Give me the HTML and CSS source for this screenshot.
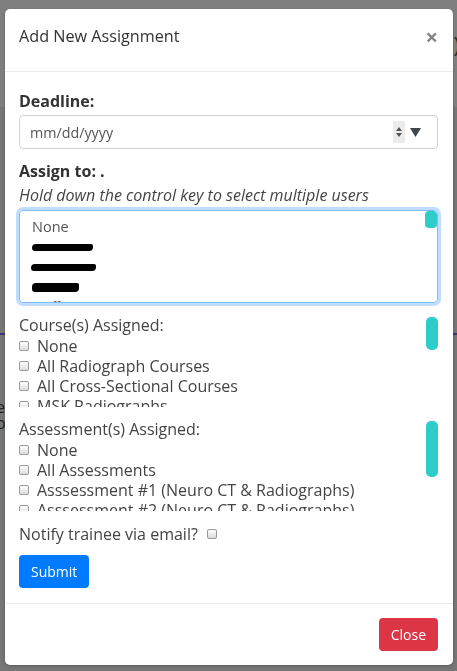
FILE: index.html
```html
<!DOCTYPE html>
<html lang="en">
<head>
<meta charset="utf-8">
<title>Add New Assignment</title>
<link rel="stylesheet" href="styles.css">
</head>
<body>
<div class="page">
  <div class="page-top"><span class="page-title">)</span></div>
  <div class="page-main">
    <div class="page-rule"></div>
    <p class="page-text">e<br>o</p>
  </div>
</div>

<div class="modal" role="dialog" aria-labelledby="modal-title">
  <div class="modal-header">
    <h5 class="modal-title" id="modal-title">Add New Assignment</h5>
    <button class="close" type="button" aria-label="Close">×</button>
  </div>

  <div class="modal-body">
    <div class="field-label">Deadline:</div>
    <div class="date-input">
      <span class="date-placeholder">mm/dd/yyyy</span>
      <span class="spin">
        <svg width="8" height="14" viewBox="0 0 8 14"><path d="M4 2 L7 6 L1 6 Z M4 12 L7 8 L1 8 Z" fill="#555"/></svg>
      </span>
      <span class="drop">
        <svg width="11" height="9" viewBox="0 0 11 9"><path d="M0 0 H11 L5.5 9 Z" fill="#3f454c"/></svg>
      </span>
    </div>

    <div class="field-label field-label-gap">Assign to: .</div>
    <p class="hint">Hold down the control key to select multiple users</p>

    <div class="listbox" role="listbox">
      <div class="opt">None</div>
      <div class="opt"><span class="redact redact-a"></span></div>
      <div class="opt"><span class="redact redact-b"></span></div>
      <div class="opt"><span class="redact redact-c"></span></div>
      <div class="opt opt-faint">ff</div>
      <div class="thumb thumb-select"></div>
    </div>

    <div class="checklist">
      <div class="checklist-title">Course(s) Assigned:</div>
      <label class="check"><input type="checkbox"> None</label>
      <label class="check"><input type="checkbox"> All Radiograph Courses</label>
      <label class="check"><input type="checkbox"> All Cross-Sectional Courses</label>
      <label class="check"><input type="checkbox"> MSK Radiographs</label>
      <label class="check"><input type="checkbox"> Neuro CT</label>
      <div class="thumb thumb-courses"></div>
    </div>

    <div class="checklist">
      <div class="checklist-title">Assessment(s) Assigned:</div>
      <label class="check"><input type="checkbox"> None</label>
      <label class="check"><input type="checkbox"> All Assessments</label>
      <label class="check"><input type="checkbox"> Asssessment #1 (Neuro CT &amp; Radiographs)</label>
      <label class="check"><input type="checkbox"> Asssessment #2 (Neuro CT &amp; Radiographs)</label>
      <label class="check"><input type="checkbox"> Asssessment #3 (MSK Radiographs)</label>
      <div class="thumb thumb-assess"></div>
    </div>

    <label class="notify">Notify trainee via email? <input type="checkbox"></label>

    <button class="btn btn-primary" type="button">Submit</button>
  </div>

  <div class="modal-footer">
    <button class="btn btn-danger" type="button">Close</button>
  </div>
</div>
</body>
</html>
```

FILE: styles.css
```css
* { box-sizing: border-box; }

html, body {
  margin: 0;
  padding: 0;
}

body {
  background: #767676;
  font-family: "Open Sans", "Liberation Sans", sans-serif;
  color: #444;
  height: 671px;
  overflow: hidden;
}

/* page behind the backdrop */
.page-top {
  height: 107px;
  background: #7f7f7f;
  display: flex;
  justify-content: flex-end;
}
.page-title {
  font-size: 22px;
  line-height: 22px;
  margin-top: 33px;
  margin-right: -3px;
  color: #3a2a14;
}
.page-main {
  padding-top: 226px;
}
.page-rule {
  height: 2px;
  background: #3d3576;
}
.page-text {
  margin: 64px 0 0 -4px;
  font-size: 16px;
  line-height: 16px;
  color: #222;
}

/* modal */
.modal {
  position: fixed;
  left: 5px;
  top: 9px;
  width: 448px;
  height: 656px;
  background: #fff;
  border-radius: 5px;
  box-shadow: 0 1px 3px rgba(0,0,0,.25);
  display: flex;
  flex-direction: column;
  overflow: hidden;
}

.modal-header {
  display: flex;
  align-items: flex-start;
  justify-content: space-between;
  padding: 16px 15px 24px 14px;
  border-bottom: 1px solid #e9ecef;
}
.modal-title {
  margin: 0;
  font-size: 16.2px;
  line-height: 22px;
  font-weight: 400;
  color: #333;
}
.close {
  border: 0;
  background: none;
  padding: 0;
  margin: 0;
  font-family: "Open Sans", "Liberation Sans", sans-serif;
  font-size: 22px;
  line-height: 22px;
  font-weight: 700;
  color: #858585;
  cursor: pointer;
}

.modal-body {
  flex: 1;
  padding: 17px 15px 15px 14px;
  display: flex;
  flex-direction: column;
  align-items: stretch;
}

.field-label {
  font-size: 16px;
  line-height: 24px;
  font-weight: 700;
  color: #333;
  margin-bottom: 2px;
}
.field-label-gap {
  margin-top: 10px;
  margin-bottom: 0;
}

.date-input {
  height: 34px;
  border: 1px solid #ced4da;
  border-radius: 4px;
  display: flex;
  align-items: center;
  padding: 0 16px 0 10px;
}
.date-placeholder {
  flex: 1;
  font-size: 14.3px;
  color: #555;
}
.spin {
  width: 12px;
  height: 22px;
  background: #ececec;
  display: flex;
  align-items: center;
  justify-content: center;
  margin-right: 5px;
}
.drop {
  display: flex;
  width: 11px;
}

.hint {
  margin: 0;
  font-size: 16px;
  line-height: 24px;
  font-style: italic;
  color: #444;
}

.listbox {
  position: relative;
  margin-top: 3px;
  height: 93px;
  border: 1px solid #80bdff;
  border-radius: 4px;
  box-shadow: 0 0 0 3px rgba(0,123,255,.25);
  padding: 6px 12px;
  overflow: hidden;
}
.opt {
  height: 20px;
  line-height: 20px;
  font-size: 14.5px;
  color: #555;
  display: flex;
  align-items: center;
}
.opt-faint {
  padding-left: 20px;
  font-size: 12px;
}
.redact {
  display: block;
  height: 7px;
  background: #000;
  border-radius: 4px 2px 4px 3px;
}
.redact-a { width: 61px; }
.redact-b { width: 65px; margin-left: -1px; }
.redact-c { width: 47px; height: 9px; }

.thumb {
  position: absolute;
  right: 0;
  top: 3px;
  width: 12px;
  background: #2ecccb;
  border-radius: 5px;
}
.thumb-select { top: 0; height: 17px; border-radius: 4px; }
.thumb-courses { height: 33px; }
.thumb-assess { height: 56px; }

.checklist {
  position: relative;
  margin-top: 11px;
  height: 93px;
  overflow: hidden;
}
.checklist-title {
  font-size: 16px;
  line-height: 22px;
  color: #444;
}
.check {
  display: flex;
  align-items: center;
  height: 20px;
  font-size: 16px;
  color: #444;
  white-space: nowrap;
}

input[type="checkbox"] {
  -webkit-appearance: none;
  appearance: none;
  width: 10px;
  height: 10px;
  margin: 0 8px 0 0;
  border: 1px solid #9a9a9a;
  border-radius: 2px;
  background: linear-gradient(#fdfdfd, #dcdcdc);
  flex: none;
}

.notify {
  margin-top: 11px;
  display: flex;
  align-items: center;
  font-size: 16px;
  line-height: 24px;
  color: #444;
}
.notify input[type="checkbox"] {
  margin: 0 0 0 9px;
}

.btn {
  font-family: "Open Sans", "Liberation Sans", sans-serif;
  font-size: 14px;
  line-height: 21px;
  padding: 6px 12px;
  border: 0;
  border-radius: 4px;
  color: #fff;
  cursor: pointer;
}
.btn-primary {
  align-self: flex-start;
  margin-top: 9px;
  background: #007bff;
}
.btn-danger {
  background: #dc3545;
}

.modal-footer {
  border-top: 1px solid #e9ecef;
  padding: 14px 15px 14px 14px;
  display: flex;
  justify-content: flex-end;
}
```
